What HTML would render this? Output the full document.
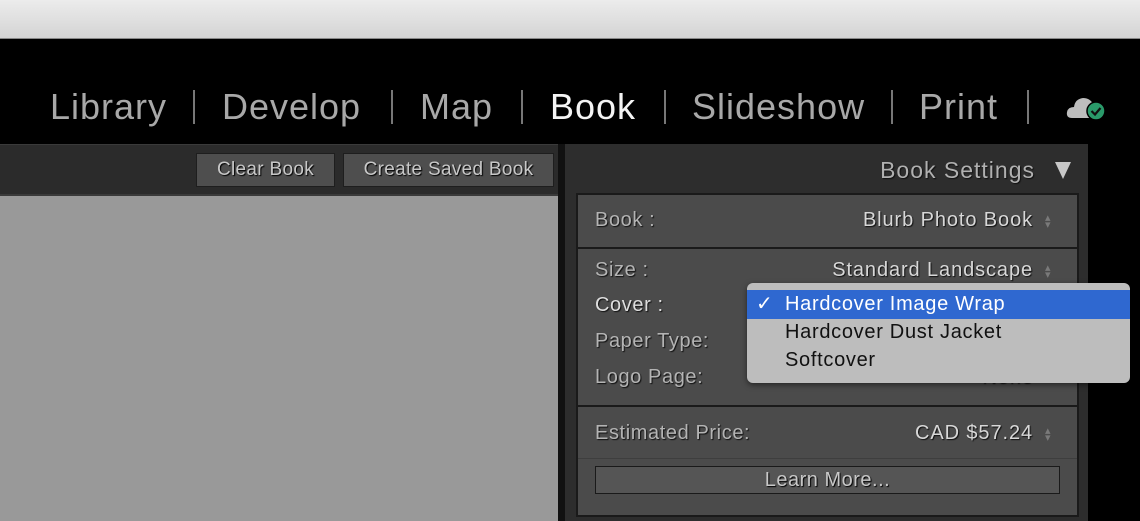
<!DOCTYPE html>
<html><head><style>
*{margin:0;padding:0;box-sizing:border-box}
body{width:1140px;height:521px;background:#000;position:relative;overflow:hidden;font-family:"Liberation Sans",sans-serif}
.a{position:absolute}
.nav{top:86px;font-size:36px;color:#a8a8a8;white-space:nowrap;letter-spacing:1px}
.sep{position:absolute;top:90px;width:2px;height:34px;background:#777}
.btn{position:absolute;top:153px;height:34px;background:#4e4e4e;border:1px solid #1e1e1e;color:#c8c8c8;font-size:19px;text-align:center;line-height:32px;text-shadow:1px 1px 1px #000;letter-spacing:0.3px}
.lbl{position:absolute;font-size:20px;color:#b4b4b4;text-shadow:1px 1px 1px #111;letter-spacing:0.6px;white-space:nowrap}
.val{position:absolute;font-size:20px;color:#d8d8d8;text-shadow:1px 1px 1px #111;text-align:right;right:107px;letter-spacing:0.9px;white-space:nowrap}
.arr{position:absolute;left:1045px;color:#7a7a7a;font-size:11px;line-height:7px}
.sec{position:absolute;left:576px;width:503px;background:#4b4b4b;border:2px solid #1a1a1a}
.dd{position:absolute;left:785px;font-size:20px;line-height:28px;letter-spacing:0.7px;white-space:nowrap}
</style></head><body>
<div class="a" style="left:0;top:0;width:1140px;height:39px;background:linear-gradient(#ececec,#d4d4d4);border-bottom:1px solid #888"></div>
<div class="a nav" style="left:50px">Library</div>
<div class="sep" style="left:193px"></div>
<div class="a nav" style="left:222px">Develop</div>
<div class="sep" style="left:391px"></div>
<div class="a nav" style="left:420px">Map</div>
<div class="sep" style="left:521px"></div>
<div class="a nav" style="left:550px;color:#f4f4f4">Book</div>
<div class="sep" style="left:664px"></div>
<div class="a nav" style="left:692px">Slideshow</div>
<div class="sep" style="left:891px"></div>
<div class="a nav" style="left:919px">Print</div>
<div class="sep" style="left:1027px"></div>
<svg class="a" style="left:1066px;top:94px" width="42" height="28" viewBox="0 0 42 28"><path d="M6 24 Q0 24 1 18 Q2 13 8 13 Q9 5 17 4 Q24 4 27 10 Q33 10 34 16 L34 24 Z" fill="#bdbdbd"/><circle cx="30" cy="17" r="9" fill="#2a9a6a" stroke="#000" stroke-width="1.5"/><path d="M25.5 17 L29 20.5 L34.5 14" stroke="#111" stroke-width="2.2" fill="none"/></svg>
<div class="a" style="left:0;top:144px;width:558px;height:50px;background:#2b2b2b;border-top:1px solid #3a3a3a"></div>
<div class="btn" style="left:196px;width:139px">Clear Book</div>
<div class="btn" style="left:343px;width:211px">Create Saved Book</div>
<div class="a" style="left:0;top:194px;width:558px;height:327px;background:#999;border-top:2px solid #3a3a3a"></div>
<div class="a" style="left:558px;top:144px;width:7px;height:377px;background:#111"></div>
<div class="a" style="left:565px;top:144px;width:523px;height:377px;background:#2d2d2d"></div>
<div class="a" style="left:1088px;top:144px;width:52px;height:377px;background:#000"></div>
<div class="lbl" style="right:105px;top:157px;font-size:23px;color:#b0b0b0;letter-spacing:1px">Book Settings</div>
<div class="a" style="left:1055px;top:162px;width:0;height:0;border-left:8px solid transparent;border-right:8px solid transparent;border-top:17px solid #c8c8c8"></div>
<div class="sec" style="top:193px;height:56px"></div>
<div class="sec" style="top:247px;height:160px"></div>
<div class="sec" style="top:405px;height:112px"></div>
<div class="a" style="left:578px;top:458px;width:499px;height:1px;background:#3e3e3e"></div>
<div class="lbl" style="left:595px;top:209px">Book :</div>
<div class="val" style="top:209px">Blurb Photo Book</div>
<div class="arr" style="top:215px">▴<br>▾</div>
<div class="lbl" style="left:595px;top:259px">Size :</div>
<div class="val" style="top:259px">Standard Landscape</div>
<div class="arr" style="top:265px">▴<br>▾</div>
<div class="lbl" style="left:595px;top:294px;color:#dedede">Cover :</div>
<div class="lbl" style="left:595px;top:330px">Paper Type:</div>
<div class="lbl" style="left:595px;top:366px">Logo Page:</div>
<div class="val" style="top:366px">None</div>
<div class="lbl" style="left:595px;top:422px">Estimated Price:</div>
<div class="val" style="top:422px">CAD $57.24</div>
<div class="arr" style="top:428px">▴<br>▾</div>
<div class="a" style="left:595px;top:466px;width:465px;height:28px;background:#555;border:1px solid #1a1a1a;color:#c8c8c8;font-size:20px;text-align:center;line-height:26px;text-shadow:1px 1px 1px #000;letter-spacing:0.5px">Learn More...</div>
<div class="a" style="left:747px;top:283px;width:383px;height:100px;background:#bdbdbd;border-radius:6px;box-shadow:0 2px 6px rgba(0,0,0,.5)"></div>
<div class="a" style="left:747px;top:290px;width:383px;height:29px;background:#2f68d0"></div>
<div class="a" style="left:756px;top:290px;font-size:20px;color:#fff;line-height:28px">✓</div>
<div class="dd" style="top:290px;color:#fff">Hardcover Image Wrap</div>
<div class="dd" style="top:318px;color:#111">Hardcover Dust Jacket</div>
<div class="dd" style="top:346px;color:#111">Softcover</div>
</body></html>
